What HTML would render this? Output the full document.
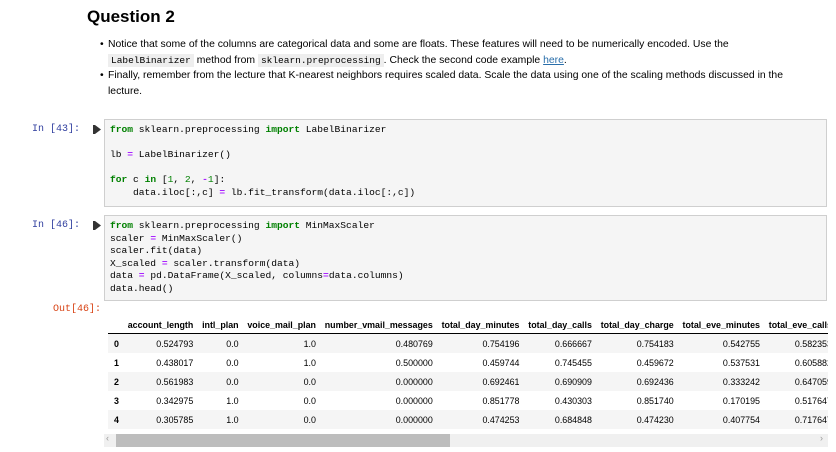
<!DOCTYPE html>
<html><head><style>
body{margin:0;width:836px;height:452px;background:#fff;position:relative;overflow:hidden;font-family:"Liberation Sans",Arial,sans-serif;color:#000}
.a{position:absolute}
h2{position:absolute;left:87px;top:7px;margin:0;font-size:17px;font-weight:bold}
.t{font-size:10.4px;line-height:15.5px;left:100px;width:730px}
.t li{margin:0;padding-left:8px;position:relative}
.t li:before{content:"•";position:absolute;left:0;top:0}
code{font-family:"Liberation Mono",monospace;font-size:9.5px;background:#eee;padding:1px 3px}
.box{position:absolute;left:104px;width:723px;background:#f5f5f5;border:1px solid #cfcfcf;font-family:"Liberation Mono",monospace;font-size:9.6px;line-height:12.5px;white-space:pre;padding:4px 5px;box-sizing:border-box}
.pr{font-family:"Liberation Mono",monospace;font-size:10px;color:#303f9f}
.k{color:#008000;font-weight:bold}.o{color:#aa22ff;font-weight:bold}.n{color:#008000}
.run{position:absolute;left:93px;width:8px;height:9px}
table{border-collapse:collapse;font-size:8.9px;position:absolute;left:108px;top:317px}
th,td{text-align:right;padding:0 4.4px;height:19px;white-space:nowrap}
thead th{border-bottom:1px solid #000;height:16px;vertical-align:middle}
tbody tr:nth-child(odd){background:#f5f5f5}
tbody th{text-align:left;padding-left:6px}
.clip{position:absolute;left:0;top:0;width:828px;height:452px;overflow:hidden}
</style></head><body>
<h2>Question 2</h2>
<ul class="a t" style="top:37px;margin:0;padding:0;list-style:none">
<li>Notice that some of the columns are categorical data and some are floats. These features will need to be numerically encoded. Use the<br><code>LabelBinarizer</code> method from <code>sklearn.preprocessing</code>. Check the second code example <span style="color:#296eaa;text-decoration:underline">here</span>.</li>
<li>Finally, remember from the lecture that K-nearest neighbors requires scaled data. Scale the data using one of the scaling methods discussed in the<br>lecture.</li>
</ul>
<div class="a pr" style="left:32px;top:124px">In [43]:</div>
<svg class="run" style="top:125px" viewBox="0 0 8 9"><rect x="0" y="0" width="2" height="9" fill="#333"/><path d="M2 0L8 4.5L2 9Z" fill="#333"/></svg>
<div class="box" style="top:119px;height:88px"><span class="k">from</span> sklearn.preprocessing <span class="k">import</span> LabelBinarizer

lb <span class="o">=</span> LabelBinarizer()

<span class="k">for</span> c <span class="k">in</span> [<span class="n">1</span>, <span class="n">2</span>, <span class="o">-</span><span class="n">1</span>]:
    data.iloc[:,c] <span class="o">=</span> lb.fit_transform(data.iloc[:,c])</div>
<div class="a pr" style="left:32px;top:220px">In [46]:</div>
<svg class="run" style="top:221px" viewBox="0 0 8 9"><rect x="0" y="0" width="2" height="9" fill="#333"/><path d="M2 0L8 4.5L2 9Z" fill="#333"/></svg>
<div class="box" style="top:215px;height:86px"><span class="k">from</span> sklearn.preprocessing <span class="k">import</span> MinMaxScaler
scaler <span class="o">=</span> MinMaxScaler()
scaler.fit(data)
X_scaled <span class="o">=</span> scaler.transform(data)
data <span class="o">=</span> pd.DataFrame(X_scaled, columns<span class="o">=</span>data.columns)
data.head()</div>
<div class="a pr" style="left:53px;top:304px;color:#d84315">Out[46]:</div>
<div class="clip">
<table>
<thead><tr><th></th><th>account_length</th><th>intl_plan</th><th>voice_mail_plan</th><th>number_vmail_messages</th><th>total_day_minutes</th><th>total_day_calls</th><th>total_day_charge</th><th>total_eve_minutes</th><th>total_eve_calls</th></tr></thead>
<tbody>
<tr><th>0</th><td>0.524793</td><td>0.0</td><td>1.0</td><td>0.480769</td><td>0.754196</td><td>0.666667</td><td>0.754183</td><td>0.542755</td><td>0.582353</td></tr>
<tr><th>1</th><td>0.438017</td><td>0.0</td><td>1.0</td><td>0.500000</td><td>0.459744</td><td>0.745455</td><td>0.459672</td><td>0.537531</td><td>0.605882</td></tr>
<tr><th>2</th><td>0.561983</td><td>0.0</td><td>0.0</td><td>0.000000</td><td>0.692461</td><td>0.690909</td><td>0.692436</td><td>0.333242</td><td>0.647059</td></tr>
<tr><th>3</th><td>0.342975</td><td>1.0</td><td>0.0</td><td>0.000000</td><td>0.851778</td><td>0.430303</td><td>0.851740</td><td>0.170195</td><td>0.517647</td></tr>
<tr><th>4</th><td>0.305785</td><td>1.0</td><td>0.0</td><td>0.000000</td><td>0.474253</td><td>0.684848</td><td>0.474230</td><td>0.407754</td><td>0.717647</td></tr>
</tbody></table>
</div>
<div class="a" style="left:104px;top:434px;width:724px;height:13px;background:#f0f0f0"></div>
<div class="a" style="left:116px;top:434px;width:334px;height:13px;background:#bdbdbd"></div>
<div class="a" style="left:106px;top:433px;font-size:9px;color:#999">‹</div>
<div class="a" style="left:820px;top:433px;font-size:9px;color:#999">›</div>
</body></html>
